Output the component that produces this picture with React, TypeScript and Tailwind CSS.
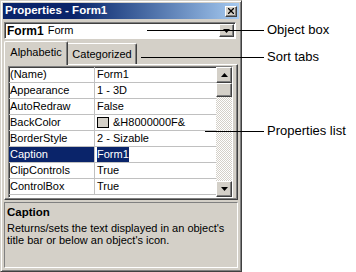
const raised =
  'border border-t-white border-l-white border-r-[#404040] border-b-[#404040] shadow-[inset_-1px_-1px_#808080]';
const sunken =
  'border border-t-[#808080] border-l-[#808080] border-r-white border-b-white shadow-[inset_1px_1px_#404040]';

const rows = [
  { name: '(Name)', value: 'Form1' },
  { name: 'Appearance', value: '1 - 3D' },
  { name: 'AutoRedraw', value: 'False' },
  { name: 'BackColor', value: '&H8000000F&', swatch: true },
  { name: 'BorderStyle', value: '2 - Sizable' },
  { name: 'Caption', value: 'Form1', selected: true },
  { name: 'ClipControls', value: 'True' },
  { name: 'ControlBox', value: 'True' },
];

function Arrow({ up }: { up?: boolean }) {
  return (
    <svg width="7" height="4" viewBox="0 0 7 4">
      <path d={up ? 'M3.5 0L7 4H0Z' : 'M0 0H7L3.5 4Z'} fill="#000" />
    </svg>
  );
}

function Callout({ top, from, label }: { top: number; from: number; label: string }) {
  return (
    <div className="absolute flex items-center" style={{ top: top - 8, left: from }}>
      <div className="h-px bg-black" style={{ width: 264 - from }} />
      <span className="ml-[3px] text-[13px] leading-4 text-black whitespace-nowrap">{label}</span>
    </div>
  );
}

export default function App() {
  return (
    <div className="relative w-[356px] h-[272px] bg-white overflow-hidden font-['Liberation_Sans',Arial,sans-serif] text-[11px] text-black">
      <div className="w-[242px] h-[272px] bg-[#d4d0c8] border border-t-[#d4d0c8] border-l-[#d4d0c8] border-r-[#404040] border-b-[#404040] shadow-[inset_1px_1px_#fff,inset_-1px_-1px_#808080] p-[2px] flex flex-col">
        {/* title bar */}
        <div className="h-[16px] flex items-center bg-linear-to-r from-[#0a246a] via-[#0a246a] via-30% to-[#a6caf0] pl-[2px] pr-[2px]">
          <span className="flex-1 text-white font-bold text-[11.5px] leading-none">Properties - Form1</span>
          <div className={`${raised} w-[12px] h-[11px] bg-[#d4d0c8] flex items-center justify-center`}>
            <svg width="6" height="6" viewBox="0 0 6 6">
              <path d="M0 0L6 6M6 0L0 6" stroke="#000" strokeWidth="1.3" />
            </svg>
          </div>
        </div>

        {/* object box */}
        <div className={`${sunken} mt-[3px] ml-[1px] w-[232px] h-[17px] bg-white flex items-center pl-[2px] pr-[1px]`}>
          <span className="font-bold text-[12px] leading-none">Form1</span>
          <span className="ml-[4px] leading-none">Form</span>
          <div className="flex-1" />
          <div className={`${raised} w-[15px] h-[13px] bg-[#d4d0c8] flex items-center justify-center`}>
            <Arrow />
          </div>
        </div>

        {/* tabs */}
        <div className="mt-[2px] ml-[1px] h-[23px] flex items-end relative z-10">
          <div className="h-[24px] -mb-px w-[64px] bg-[#d4d0c8] border-t border-l border-white border-r border-r-[#404040] shadow-[inset_-1px_0_#808080] rounded-t-[2px] flex items-center justify-center pb-[2px]">
            Alphabetic
          </div>
          <div className="h-[21px] w-[69px] bg-[#d4d0c8] border-t border-white border-r border-r-[#404040] shadow-[inset_-1px_0_#808080] rounded-tr-[2px] flex items-center justify-center">
            Categorized
          </div>
        </div>

        {/* properties panel */}
        <div className={`${raised} ml-[1px] w-[234px] h-[136px] pt-[1px] px-[3px]`}>
          <div className={`${sunken} w-[225px] h-[132px] bg-white flex`}>
            <div className="flex-1 flex flex-col">
              {rows.map((r) => (
                <div key={r.name} className="h-[16px] flex border-b border-[#c0c0c0]">
                  <div
                    className={`w-[86px] pl-[1px] border-r border-[#c0c0c0] leading-[15px] ${
                      r.selected ? 'bg-[#0a246a] text-white' : ''
                    }`}
                  >
                    {r.name}
                  </div>
                  <div className="flex-1 pl-[2px] flex items-center leading-[15px]">
                    {r.swatch && (
                      <span className="w-[12px] h-[11px] border border-black bg-[#d4d0c8] mr-[4px]" />
                    )}
                    <span className={r.selected ? 'bg-[#0a246a] text-white' : ''}>{r.value}</span>
                  </div>
                </div>
              ))}
            </div>
            <div className="w-[16px] flex flex-col bg-[repeating-conic-gradient(#d4d0c8_0_25%,#ffffff_0_50%)] bg-[length:2px_2px]">
              <div className={`${raised} h-[16px] bg-[#d4d0c8] flex items-center justify-center`}>
                <Arrow up />
              </div>
              <div className={`${raised} h-[14px] bg-[#d4d0c8]`} />
              <div className="flex-1" />
              <div className={`${raised} h-[16px] bg-[#d4d0c8] flex items-center justify-center`}>
                <Arrow />
              </div>
            </div>
          </div>
        </div>

        {/* description */}
        <div className="mt-[2px] ml-[1px] w-[234px] h-[66px] border border-t-[#808080] border-l-[#808080] border-r-white border-b-white px-[2px] pt-[3px]">
          <div className="font-bold text-[11.5px] leading-[13px]">Caption</div>
          <div className="mt-[3px] leading-[12px]">
            Returns/sets the text displayed in an object's title bar or below an object's icon.
          </div>
        </div>
      </div>

      <Callout top={30} from={147} label="Object box" />
      <Callout top={57} from={141} label="Sort tabs" />
      <Callout top={131} from={205} label="Properties list" />
    </div>
  );
}
